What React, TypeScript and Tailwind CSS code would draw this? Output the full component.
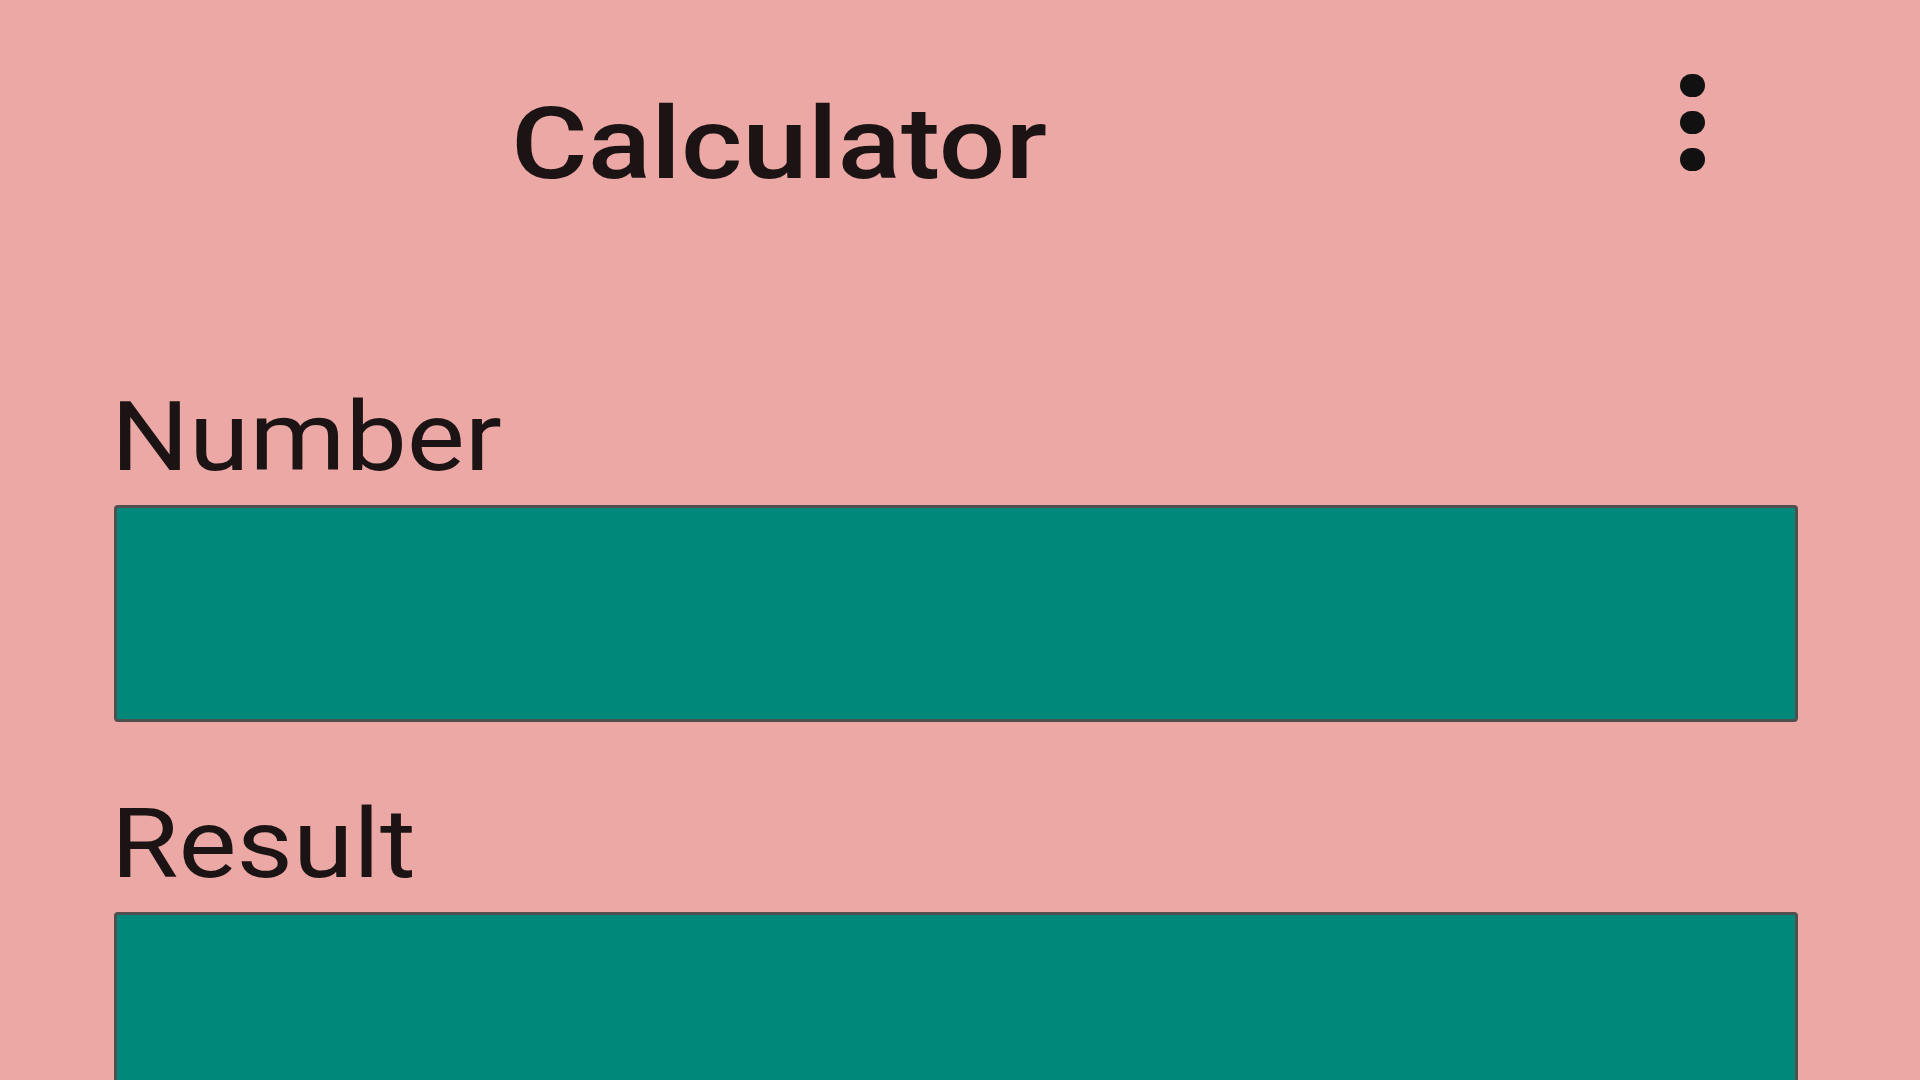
const font = { fontFamily: "Roboto, 'Noto Sans', sans-serif" };

function Toolbar() {
	return (
		<header className="flex items-start pl-[511px] pr-[215px]">
			<h1 className="mt-[94px] origin-left scale-x-[1.175] text-[100px] font-medium leading-none text-[#1c1414]">
				Calculator
			</h1>
			<button
				type="button"
				aria-label="More options"
				className="ml-auto mt-[74px] flex flex-col items-center gap-[14px]"
			>
				<span className="h-[23px] w-[25px] rounded-full bg-[#111]" />
				<span className="h-[23px] w-[25px] rounded-full bg-[#111]" />
				<span className="h-[23px] w-[25px] rounded-full bg-[#111]" />
			</button>
		</header>
	);
}

function Field({ label }: { label: string }) {
	return (
		<div className="flex flex-col">
			<label className="ml-[-3px] origin-left scale-x-[1.14] text-[96px] leading-none text-[#1c1414]">
				{label}
			</label>
			<div className="mt-[20px] h-[217px] rounded-[4px] border-[3px] border-[#4f4f4f] bg-[#00897b]" />
		</div>
	);
}

export default function App() {
	return (
		<main
			className="h-screen w-full overflow-hidden bg-[#eba8a5]"
			style={font}
		>
			<Toolbar />
			<section className="mt-[195px] flex flex-col gap-[74px] pl-[114px] pr-[122px]">
				<Field label="Number" />
				<Field label="Result" />
			</section>
		</main>
	);
}
